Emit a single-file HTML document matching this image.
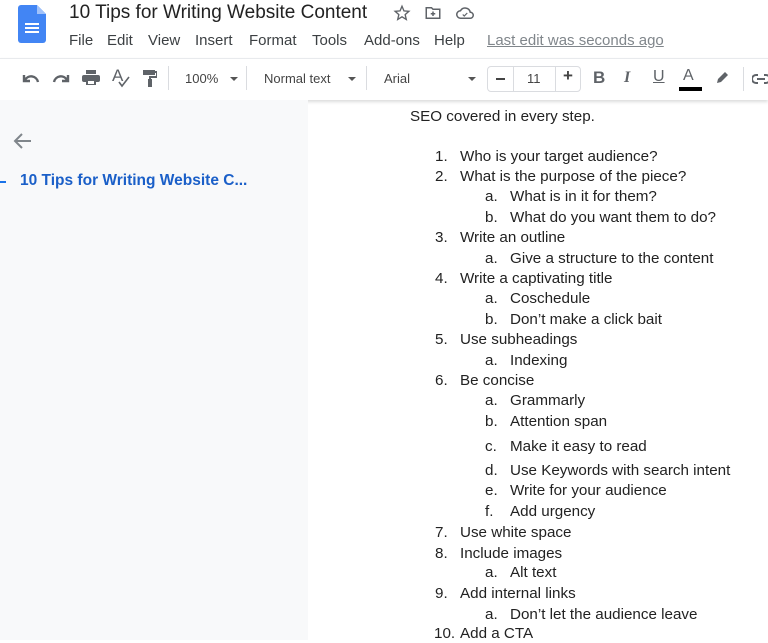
<!DOCTYPE html>
<html><head><meta charset="utf-8"><style>
*{margin:0;padding:0;box-sizing:border-box}
body{width:768px;height:640px;overflow:hidden;background:#fff;font-family:"Liberation Sans",Arial,sans-serif;position:relative}
.a{position:absolute;white-space:nowrap}
.side{position:absolute;left:0;top:100px;width:308px;height:540px;background:#f8f9fa}
.tb{position:absolute;left:0;top:58px;width:768px;height:42px;background:#fff;border-top:1px solid #e8eaed;box-shadow:0 2px 3px rgba(60,64,67,.18)}
.menu{font-size:15px;color:#3c4043;top:32px}
.tt{font-size:13px;color:#444;top:71px}
.sep{position:absolute;top:66px;width:1px;height:24px;background:#dadce0}
.l{position:absolute;font-size:15.2px;color:#222;line-height:18px;white-space:nowrap;margin-top:2px}
.tri{position:absolute;width:0;height:0;border-left:4px solid transparent;border-right:4px solid transparent;border-top:4px solid #555;top:77px}
</style></head><body>
<svg class="a" style="left:18px;top:5px" width="28" height="38" viewBox="0 0 28 38"><path d="M3 0h16l9 9v26a3 3 0 0 1-3 3H3a3 3 0 0 1-3-3V3a3 3 0 0 1 3-3z" fill="#4285f4"/><path d="M19 0l9 9h-9z" fill="#a1c2fa"/><rect x="7" y="18" width="14" height="2" fill="#fff"/><rect x="7" y="22" width="14" height="2" fill="#fff"/><rect x="7" y="26" width="14" height="2" fill="#fff"/></svg>
<div class="a" style="left:69px;top:2px;font-size:19px;color:#222">10 Tips for Writing Website Content</div>
<svg class="a" style="left:393px;top:4px" width="18" height="18" viewBox="0 0 24 24"><path d="M12 3l2.6 6.2 6.6.5-5 4.4 1.5 6.5L12 17l-5.7 3.6 1.5-6.5-5-4.4 6.6-.5z" fill="none" stroke="#5f6368" stroke-width="1.8"/></svg>
<svg class="a" style="left:424px;top:4px" width="18" height="18" viewBox="0 0 24 24"><path d="M3 5h7l2 2h9v12H3z" fill="none" stroke="#5f6368" stroke-width="2"/><path d="M12 10v6M9 13h6" stroke="#5f6368" stroke-width="2"/></svg>
<svg class="a" style="left:455px;top:4px" width="20" height="18" viewBox="0 0 24 24"><path d="M6 19a5 5 0 0 1 0-10 7 7 0 0 1 13 2 4 4 0 0 1 0 8z" fill="none" stroke="#5f6368" stroke-width="2"/><path d="M9 14l2 2 4-4" stroke="#5f6368" stroke-width="1.6" fill="none"/></svg>
<div class="a menu" style="left:69px">File</div>
<div class="a menu" style="left:107px">Edit</div>
<div class="a menu" style="left:148px">View</div>
<div class="a menu" style="left:195px">Insert</div>
<div class="a menu" style="left:249px">Format</div>
<div class="a menu" style="left:312px">Tools</div>
<div class="a menu" style="left:364px">Add-ons</div>
<div class="a menu" style="left:434px">Help</div>
<div class="a menu" style="left:487px;color:#80868b;text-decoration:underline">Last edit was seconds ago</div>
<div class="tb"></div>
<svg class="a" style="left:22px;top:71px" width="18" height="14" viewBox="0 0 18 14"><path d="M2 4v6h6M3 9a7 7 0 0 1 13 2" fill="none" stroke="#5f6368" stroke-width="2.4"/></svg>
<svg class="a" style="left:52px;top:71px" width="18" height="14" viewBox="0 0 18 14"><path d="M16 4v6h-6M15 9a7 7 0 0 0-13 2" fill="none" stroke="#5f6368" stroke-width="2.4"/></svg>
<svg class="a" style="left:82px;top:70px" width="18" height="16" viewBox="0 0 18 16"><rect x="4" y="0" width="10" height="4" fill="#5f6368"/><rect x="0" y="5" width="18" height="7" rx="2" fill="#5f6368"/><rect x="4" y="10" width="10" height="5" fill="#5f6368"/><rect x="6" y="11" width="6" height="3" fill="#fff"/></svg>
<div class="a" style="left:112px;top:66px;font-size:17px;color:#5f6368">A</div>
<svg class="a" style="left:117px;top:76px" width="14" height="12"><path d="M2 6l3 4 7-9" fill="none" stroke="#5f6368" stroke-width="1.6"/></svg>
<svg class="a" style="left:143px;top:70px" width="14" height="17" viewBox="0 0 14 17"><rect x="0" y="0" width="12" height="5" fill="#5f6368"/><path d="M12 2h2v5H7v9" fill="none" stroke="#5f6368" stroke-width="2"/><rect x="5" y="9" width="4" height="8" fill="#5f6368"/></svg>
<div class="sep" style="left:168px"></div>
<div class="a tt" style="left:185px">100%</div><div class="tri" style="left:230px"></div>
<div class="sep" style="left:246px"></div>
<div class="a tt" style="left:264px">Normal text</div><div class="tri" style="left:348px"></div>
<div class="sep" style="left:366px"></div>
<div class="a tt" style="left:384px">Arial</div><div class="tri" style="left:468px"></div>
<div class="a" style="left:487px;top:66px;width:94px;height:26px;border:1px solid #dadce0;border-radius:4px"></div>
<div class="a" style="left:513px;top:67px;width:1px;height:24px;background:#dadce0"></div>
<div class="a" style="left:555px;top:67px;width:1px;height:24px;background:#dadce0"></div>
<div class="a" style="left:496px;top:78px;width:9px;height:2px;background:#444"></div>
<div class="a tt" style="left:527px">11</div>
<div class="a" style="left:563px;top:66px;font-size:17px;color:#444;font-weight:bold">+</div>
<div class="a" style="left:593px;top:68px;font-size:17px;font-weight:bold;color:#5f6368">B</div>
<div class="a" style="left:624px;top:69px;font-size:16px;font-style:italic;font-family:'Liberation Serif',serif;font-weight:bold;color:#5f6368">I</div>
<div class="a" style="left:653px;top:68px;font-size:16px;text-decoration:underline;color:#5f6368">U</div>
<div class="a" style="left:683px;top:67px;font-size:16px;color:#5f6368">A</div>
<div class="a" style="left:679px;top:87px;width:23px;height:4px;background:#000"></div>
<svg class="a" style="left:714px;top:70px" width="16" height="16" viewBox="0 0 16 16"><path d="M3 13l1-4 7-7 3 3-7 7z" fill="#5f6368"/></svg>
<div class="a" style="left:743px;top:67px;width:1px;height:24px;background:#dadce0"></div>
<svg class="a" style="left:752px;top:74px" width="18" height="10"><path d="M6 1H4a4 4 0 0 0 0 8h2M12 1h2a4 4 0 0 1 0 8h-2M5 5h8" fill="none" stroke="#5f6368" stroke-width="2"/></svg>
<div class="side"></div>
<svg class="a" style="left:13px;top:132px" width="20" height="18" viewBox="0 0 20 18"><path d="M18 9H3M9 2L2 9l7 7" fill="none" stroke="#80868b" stroke-width="2"/></svg>
<div class="a" style="left:0;top:181px;width:6px;height:2px;background:#1a73e8"></div>
<div class="a" style="left:20px;top:172px;font-size:15.5px;font-weight:bold;color:#1a5fc8">10 Tips for Writing Website C...</div>
<div class="l" style="left:410px;top:106px">SEO covered in every step.</div>
<div class="l" style="left:435px;top:146px">1.</div><div class="l" style="left:460px;top:146px">Who is your target audience?</div>
<div class="l" style="left:435px;top:166px">2.</div><div class="l" style="left:460px;top:166px">What is the purpose of the piece?</div>
<div class="l" style="left:485px;top:186px">a.</div><div class="l" style="left:510px;top:186px">What is in it for them?</div>
<div class="l" style="left:485px;top:207px">b.</div><div class="l" style="left:510px;top:207px">What do you want them to do?</div>
<div class="l" style="left:435px;top:227px">3.</div><div class="l" style="left:460px;top:227px">Write an outline</div>
<div class="l" style="left:485px;top:248px">a.</div><div class="l" style="left:510px;top:248px">Give a structure to the content</div>
<div class="l" style="left:435px;top:268px">4.</div><div class="l" style="left:460px;top:268px">Write a captivating title</div>
<div class="l" style="left:485px;top:288px">a.</div><div class="l" style="left:510px;top:288px">Coschedule</div>
<div class="l" style="left:485px;top:309px">b.</div><div class="l" style="left:510px;top:309px">Don’t make a click bait</div>
<div class="l" style="left:435px;top:329px">5.</div><div class="l" style="left:460px;top:329px">Use subheadings</div>
<div class="l" style="left:485px;top:350px">a.</div><div class="l" style="left:510px;top:350px">Indexing</div>
<div class="l" style="left:435px;top:370px">6.</div><div class="l" style="left:460px;top:370px">Be concise</div>
<div class="l" style="left:485px;top:390px">a.</div><div class="l" style="left:510px;top:390px">Grammarly</div>
<div class="l" style="left:485px;top:411px">b.</div><div class="l" style="left:510px;top:411px">Attention span</div>
<div class="l" style="left:485px;top:436px">c.</div><div class="l" style="left:510px;top:436px">Make it easy to read</div>
<div class="l" style="left:485px;top:460px">d.</div><div class="l" style="left:510px;top:460px">Use Keywords with search intent</div>
<div class="l" style="left:485px;top:480px">e.</div><div class="l" style="left:510px;top:480px">Write for your audience</div>
<div class="l" style="left:485px;top:501px">f.</div><div class="l" style="left:510px;top:501px">Add urgency</div>
<div class="l" style="left:435px;top:522px">7.</div><div class="l" style="left:460px;top:522px">Use white space</div>
<div class="l" style="left:435px;top:543px">8.</div><div class="l" style="left:460px;top:543px">Include images</div>
<div class="l" style="left:485px;top:562px">a.</div><div class="l" style="left:510px;top:562px">Alt text</div>
<div class="l" style="left:435px;top:583px">9.</div><div class="l" style="left:460px;top:583px">Add internal links</div>
<div class="l" style="left:485px;top:604px">a.</div><div class="l" style="left:510px;top:604px">Don’t let the audience leave</div>
<div class="l" style="left:434px;top:623px">10.</div><div class="l" style="left:460px;top:623px">Add a CTA</div>
</body></html>
